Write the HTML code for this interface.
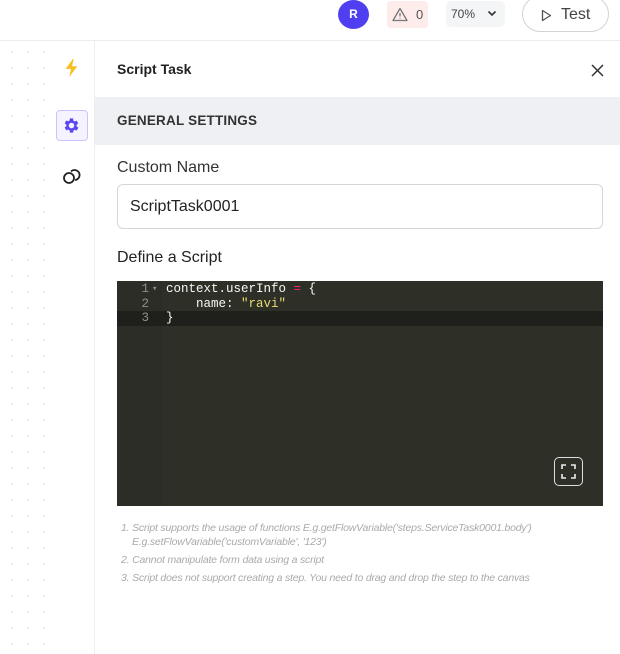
<!DOCTYPE html>
<html><head><style>
*{box-sizing:border-box;margin:0;padding:0}
body{width:620px;height:654px;overflow:hidden;background:#fff;font-family:"Liberation Sans",sans-serif;position:relative;color:#222}
.dots{position:absolute;left:0;top:40px;width:48px;height:614px;background-image:radial-gradient(#ececef 1px,transparent 1.3px);background-size:16px 16px;background-position:4px 4px}
.topline{position:absolute;left:0;top:40px;width:620px;height:1px;background:#ececec}
.side{position:absolute;left:48px;top:41px;width:47px;height:613px;background:#fff;border-right:1px solid #eee}
.panel{position:absolute;left:95px;top:41px;width:525px;height:613px;background:#fff}
.mono{font-family:"Liberation Mono",monospace}
</style></head><body>
<div class="dots"></div>
<div class="topline"></div>
<div style="position:absolute;left:338px;top:0;width:31px;height:29px;border-radius:50%;background:#4f3ff0;color:#fff;font-size:12px;font-weight:bold;text-align:center;line-height:29px">R</div>
<div style="position:absolute;left:387px;top:1px;width:41px;height:27px;border-radius:4px;background:#fdecea;font-size:13px;color:#555;line-height:27px">
<svg style="position:absolute;left:5px;top:6px" width="16" height="15" viewBox="0 0 16 15"><path d="M8 1.5 L15 13.5 H1 Z" fill="none" stroke="#777" stroke-width="1.3" stroke-linejoin="round"/><path d="M8 6v3.5M8 11v.6" stroke="#777" stroke-width="1.3"/></svg>
<span style="position:absolute;left:29px">0</span></div>
<div style="position:absolute;left:446px;top:1px;width:59px;height:26px;border-radius:5px;background:#f3f5f7;font-size:12px;color:#444;line-height:26px;padding-left:5px">70%
<svg style="position:absolute;left:41px;top:9px" width="10" height="7" viewBox="0 0 10 7"><path d="M1.5 1.5L5 5L8.5 1.5" fill="none" stroke="#333" stroke-width="1.6"/></svg></div>
<div style="position:absolute;left:522px;top:-4px;width:87px;height:36px;border-radius:18px;border:1px solid #d4d4d4;font-size:16px;color:#444;line-height:36px;padding-left:38px">Test
<svg style="position:absolute;left:18px;top:12px" width="11" height="13" viewBox="0 0 11 13"><path d="M1.5 1.5L9.5 6.5L1.5 11.5Z" fill="none" stroke="#555" stroke-width="1.3" stroke-linejoin="round"/></svg></div>

<div class="side">
<svg style="position:absolute;left:15px;top:18px" width="17" height="18" viewBox="0 0 17 20"><path d="M10 0L2 11H8L6 20L15 8H9L11 0Z" fill="#f7bf1e"/></svg>
<div style="position:absolute;left:8px;top:69px;width:32px;height:31px;border:1px solid #c9c5fb;border-radius:4px;background:#f4f3ff"></div>
<svg style="position:absolute;left:14px;top:75px" width="19" height="19" viewBox="0 0 24 24"><path fill="#5b46f2" d="M19.4 13a7.5 7.5 0 000-2l2.1-1.6-2-3.5-2.5 1a7 7 0 00-1.7-1L15 3h-4l-.4 2.7a7 7 0 00-1.7 1l-2.5-1-2 3.5L6.5 11a7.5 7.5 0 000 2l-2.1 1.6 2 3.5 2.5-1a7 7 0 001.7 1L11 21h4l.4-2.7a7 7 0 001.7-1l2.5 1 2-3.5zM13 15.5a3.5 3.5 0 110-7 3.5 3.5 0 010 7z" transform="translate(-1 0)"/></svg>
<svg style="position:absolute;left:14px;top:125px" width="19" height="19" viewBox="0 0 19 19"><circle cx="7" cy="12" r="5" fill="none" stroke="#222" stroke-width="1.8"/><path d="M9 5.5A5 5 0 1 1 13 14" fill="none" stroke="#222" stroke-width="1.8"/></svg>
</div>

<div class="panel">
<div style="position:absolute;left:22px;top:20px;font-size:14px;font-weight:bold;color:#222">Script Task</div>
<svg style="position:absolute;left:496px;top:23px" width="13" height="13" viewBox="0 0 13 13"><path d="M1 1L12 12M12 1L1 12" stroke="#333" stroke-width="1.5"/></svg>
<div style="position:absolute;left:0;top:56px;width:525px;height:48px;background:#eef0f3;font-size:13.5px;font-weight:bold;color:#333;line-height:48px;padding-left:22px;letter-spacing:.2px">GENERAL SETTINGS</div>
<div style="position:absolute;left:22px;top:118px;font-size:16px;color:#333">Custom Name</div>
<div style="position:absolute;left:22px;top:143px;width:486px;height:45px;border:1px solid #d6d6d6;border-radius:6px;font-size:16px;color:#222;line-height:43px;padding-left:12px">ScriptTask0001</div>
<div style="position:absolute;left:22px;top:208px;font-size:16px;color:#222">Define a Script</div>
<div class="mono" style="position:absolute;left:22px;top:240px;width:486px;height:225px;background:#2e3028;font-size:12.5px;line-height:14.5px">
<div style="position:absolute;left:0;top:0;width:45px;height:225px;background:#2b2d26"></div>
<div style="position:absolute;left:0;top:30px;width:486px;height:14.5px;background:#1f201c"></div>
<div style="position:absolute;left:0;top:1px;width:32px;text-align:right;color:#8f908a">1<br>2<br>3</div>
<div style="position:absolute;left:35px;top:1px;color:#8f908a;font-size:9px">▾</div>
<div style="position:absolute;left:49px;top:1px;color:#f8f8f2;white-space:pre">context.userInfo <span style="color:#f92672">=</span> {
    name: <span style="color:#e6db74">"ravi"</span>
}</div>
<div style="position:absolute;left:437px;top:176px;width:29px;height:29px;border:1.5px solid #ddd;border-radius:5px"></div>
<svg style="position:absolute;left:444px;top:183px" width="15" height="15" viewBox="0 0 15 15"><path d="M1 5V1H5M10 1H14V5M14 10V14H10M5 14H1V10" fill="none" stroke="#eee" stroke-width="1.6"/></svg>
</div>
<div style="position:absolute;left:26px;top:480px;font-size:10.5px;font-style:italic;color:#aaa;line-height:14px;white-space:nowrap;letter-spacing:-.2px">
<div>1. Script supports the usage of functions E.g.getFlowVariable('steps.ServiceTask0001.body')</div>
<div style="padding-left:11px">E.g.setFlowVariable('customVariable', '123')</div>
<div style="margin-top:4px">2. Cannot manipulate form data using a script</div>
<div style="margin-top:4px">3. Script does not support creating a step. You need to drag and drop the step to the canvas</div>
</div>
</div>
</body></html>
